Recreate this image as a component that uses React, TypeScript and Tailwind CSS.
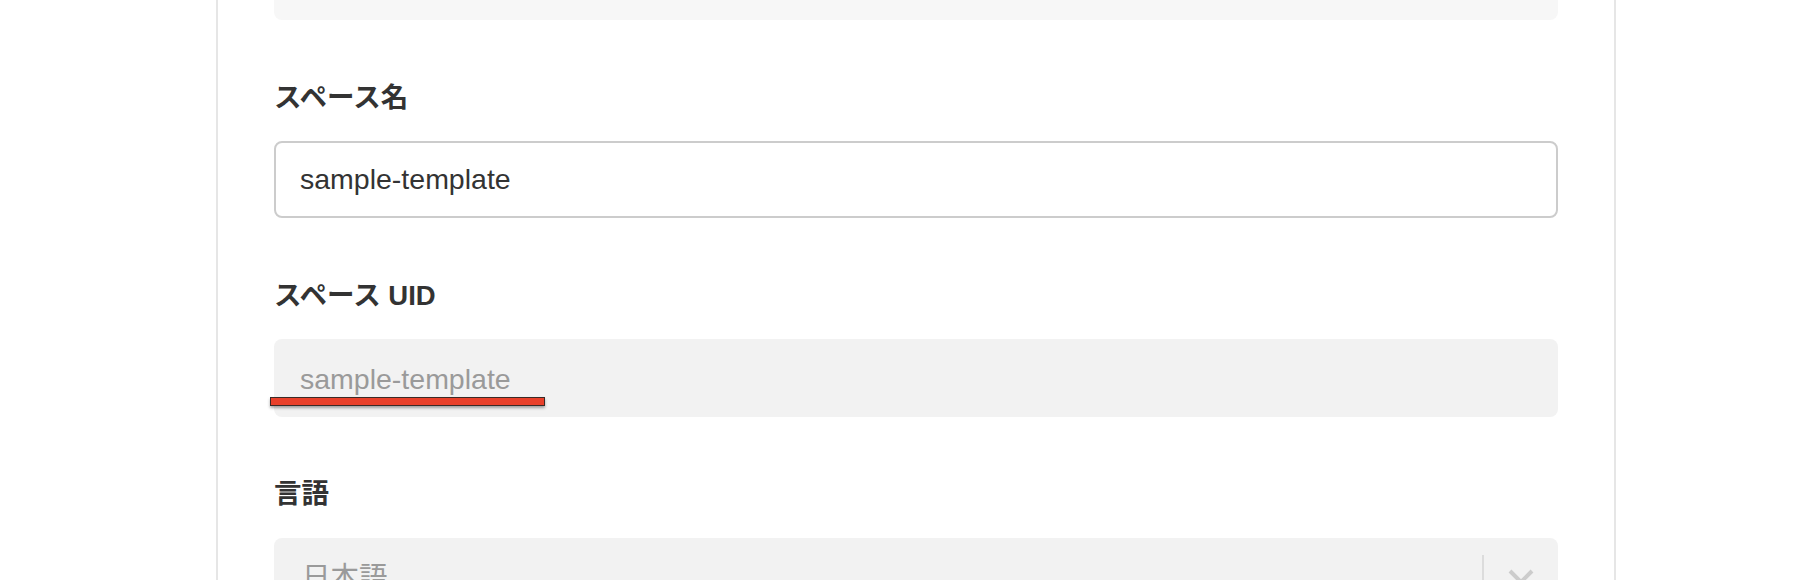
import * as React from 'react';

const FONT = { fontFamily: '"Liberation Sans", "Noto Sans CJK JP", sans-serif' };

function Label({ children }: { children: React.ReactNode }) {
  return (
    <label className="block h-[40px] leading-[40px] text-[27.5px] font-bold text-[#333333]">
      {children}
    </label>
  );
}

export default function App() {
  return (
    <div className="h-[580px] w-full overflow-hidden bg-white" style={FONT}>
      <div className="ml-[216px] w-[1400px] h-full border-x-2 border-[#e6e6e6] px-[56px]">
        {/* previous field, cut off at the top */}
        <div className="h-[20px] rounded-b-[8px] bg-[#f7f7f7]" />

        <div className="mt-[58px]">
          <Label>スペース名</Label>
          <input
            readOnly
            value="sample-template"
            className="mt-[23px] block h-[77px] w-full rounded-[8px] border-2 border-[#cccccc] bg-white px-[24px] text-[28.5px] text-[#333333] outline-none"
          />
        </div>

        <div className="mt-[58px]">
          <Label>スペース UID</Label>
          <div className="relative mt-[23px]">
            <input
              readOnly
              disabled
              value="sample-template"
              className="block h-[78px] w-full rounded-[8px] bg-[#f2f2f2] px-[26px] pt-[2px] text-[28.5px] text-[#9a9a9a] outline-none"
            />
            <span className="absolute left-[-4px] top-[58px] h-[9px] w-[275px] border border-[#3a2a26] bg-[#e8402a] shadow-[0_2px_3px_rgba(0,0,0,0.35)]" />
          </div>
        </div>

        <div className="mt-[57px]">
          <Label>言語</Label>
          <div className="mt-[24px] flex h-[78px] w-full items-center rounded-[8px] bg-[#f2f2f2]">
            <span className="flex-1 pl-[28px] text-[28.5px] text-[#9a9a9a]">日本語</span>
            <span className="h-[44px] w-[2px] bg-[#dcdcdc]" />
            <span className="flex w-[74px] items-center justify-center">
              <svg width="26" height="16" viewBox="0 0 26 16" fill="none">
                <path d="M2 2l11 11L24 2" stroke="#cccccc" strokeWidth="4" />
              </svg>
            </span>
          </div>
        </div>
      </div>
    </div>
  );
}
